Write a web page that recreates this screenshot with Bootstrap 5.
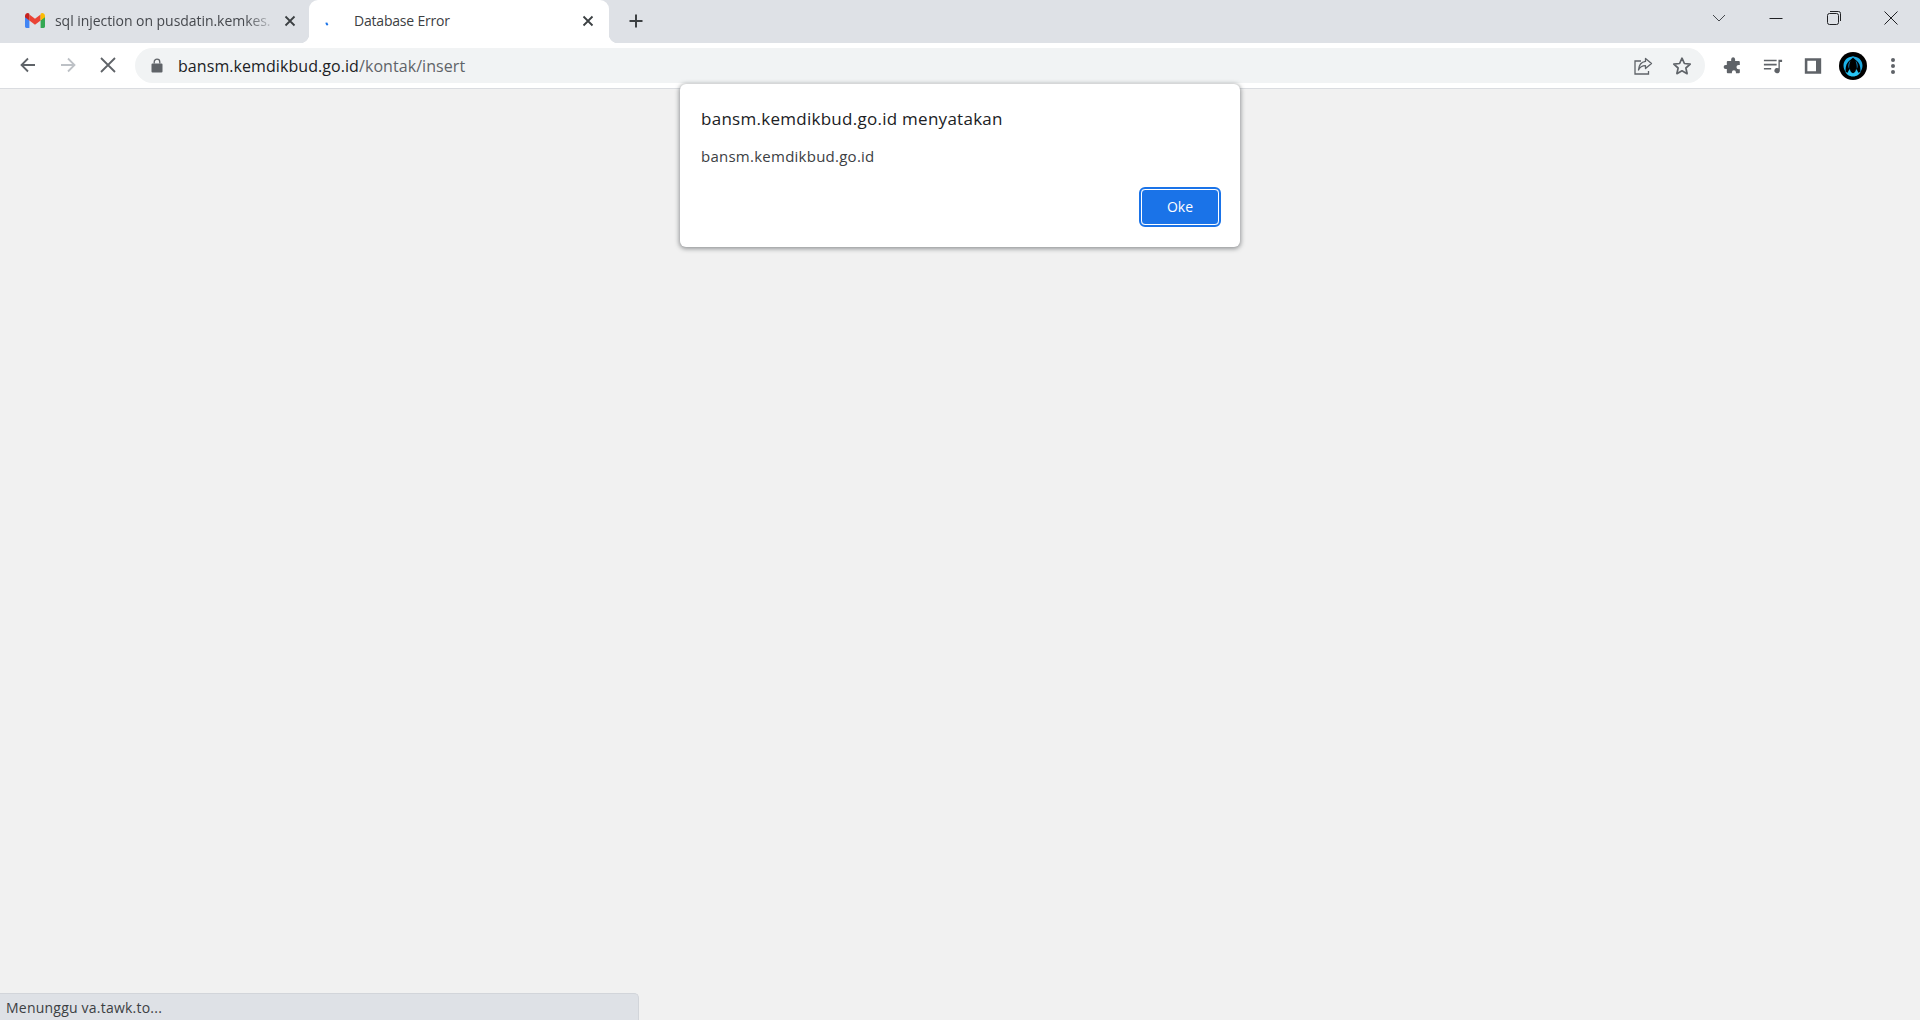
<!doctype html>
<html lang="id">
<head>
<meta charset="utf-8">
<title>Database Error</title>
<link href="https://cdn.jsdelivr.net/npm/bootstrap@5.3.0/dist/css/bootstrap.min.css" rel="stylesheet">
<style>
html,body{height:100%;overflow:hidden}
body{font-family:"Open Sans","Noto Sans",sans-serif;background:#f1f1f1;color:#202124}
.shell{height:100vh}
.tabstrip{height:43px;background:#dee1e6;flex:none}
.tab-idle{width:309px;padding:0 12px 2px 25px}
.tab-live{width:300px;background:#fff;border-radius:9px 9px 0 0;padding:0 14px 2px 16px}
.tab-live::before,.tab-live::after{content:"";position:absolute;bottom:0;width:9px;height:9px}
.tab-live::before{left:-9px;background:radial-gradient(circle at 0 0,transparent 9px,#fff 9.5px)}
.tab-live::after{right:-9px;background:radial-gradient(circle at 100% 0,transparent 9px,#fff 9.5px)}
.tab-label{font-size:14px;line-height:20px;color:#45484d;white-space:nowrap;flex:1 1 auto}
.tab-idle .tab-label{margin-left:10px;-webkit-mask-image:linear-gradient(90deg,#000 190px,transparent 222px);mask-image:linear-gradient(90deg,#000 190px,transparent 222px);letter-spacing:-.05px}
.tab-live .tab-label{margin-left:17px;color:#3c4043;letter-spacing:-.2px}
.spin-slot{width:12px;height:12px;flex:none}
.new-tab{margin:0 0 2px 16px;width:22px;flex:none}
.winctl{width:57.5px;flex:none}
.winctl svg{display:block;margin:0 auto}
.window-controls{height:36px}
.toolbar{height:46px;background:#fff;border-bottom:1px solid #dadce0;flex:none;padding-left:16.5px}
.navbtn{width:22px;flex:none;margin-right:18px;margin-bottom:1px}
.omni{width:1570px;height:35px;margin-left:-1.5px;background:#f1f3f4;border-radius:18px;padding-left:16px;padding-right:13px;flex:none}
.url{font-size:16px;line-height:22px;margin-left:15px;color:#202124;white-space:nowrap;letter-spacing:.07px}
.url-rest{color:#5f6368}
.omni-actions{gap:19px}
.tools{width:215px;flex:none;padding-left:8px}
.tool-slot{width:40px;flex:none}
.page-area{background:#f1f1f1}
.alert-box{top:-5px;left:680px;width:560px;height:163px;background:#fff;border-radius:6px;box-shadow:0 1px 4px 1px rgba(60,64,67,.5);padding:23px 21px 0 21px}
.alert-title{font-size:17px;line-height:24px;color:#202124;margin:0;letter-spacing:.27px}
.alert-msg{font-size:15px;line-height:20px;color:#3c4043;margin:15px 0 0;letter-spacing:.25px}
.ok-btn{width:78px;height:36px;margin:23px 0 0 auto;display:block;background:#1a73e8;border:1px solid #fff;border-radius:4px;outline:2px solid #1a73e8;font-size:14px;line-height:20px;color:#fff;padding:0}
.ok-btn:hover{background:#1a73e8;color:#fff}
.status{left:0;bottom:0;width:639px;height:27px;background:#dee1e6;border:1px solid #d2d5da;border-left:0;border-bottom:0;border-radius:0 5px 0 0;font-size:14px;line-height:27px;padding-left:6px;color:#3c4043;letter-spacing:.22px}
</style>
</head>
<body>
<div class="shell d-flex flex-column">
  <div class="tabstrip d-flex align-items-center">
    <div class="tab-idle d-flex align-items-center h-100">
      <svg width="20" height="15" viewBox="0 0 20 15"><path d="M0 3v10.6C0 14.4.6 15 1.4 15h3V7.5z" fill="#4285f4"/><path d="M20 3v10.6c0 .8-.6 1.4-1.4 1.4h-3V7.5z" fill="#34a853"/><path d="M15.6 1.6 10 5.8 4.4 1.6 4.4 7.5 10 11.7l5.6-4.2z" fill="#ea4335"/><path d="M0 3c0-2.4 2.8-3.8 4.4-2.3v6.8L0 4.300z" fill="#c5221f"/><path d="M20 3c0-2.400-2.800-3.800-4.400-2.300v6.800L20 4.300z" fill="#fbbc04"/></svg>
      <span class="tab-label">sql injection on pusdatin.kemkes.</span>
      <svg width="14" height="14" viewBox="0 0 14 14"><path d="M2.500 2.500l9 9m0-9l-9 9" stroke="#3c4043" stroke-width="1.800" fill="none"/></svg>
    </div>
    <div class="tab-live position-relative d-flex align-items-center h-100">
      <svg class="spin-slot" viewBox="0 0 12 12"><path d="M1.300 7.600a5 5 0 0 0 1.400 2.500" stroke="#1a73e8" stroke-width="2" fill="none"/></svg>
      <span class="tab-label">Database Error</span>
      <svg width="14" height="14" viewBox="0 0 14 14"><path d="M2.500 2.500l9 9m0-9l-9 9" stroke="#3c4043" stroke-width="1.800" fill="none"/></svg>
    </div>
    <svg class="new-tab" width="22" height="22" viewBox="0 0 22 22"><path d="M11 4.500v13M4.500 11h13" stroke="#3c4043" stroke-width="2" fill="none"/></svg>
    <div class="ms-auto d-flex align-items-center align-self-start window-controls">
      <div class="winctl"><svg width="16" height="20" viewBox="0 0 16 20"><path d="M2 7l6 6 6-6" stroke="#45484d" stroke-width="1" fill="none"/></svg></div>
      <div class="winctl"><svg width="14" height="20" viewBox="0 0 14 20"><path d="M.5 10.500h13" stroke="#202124" stroke-width="1"/></svg></div>
      <div class="winctl"><svg width="14" height="20" viewBox="0 0 14 20"><rect x=".5" y="5.500" width="11" height="11" rx="2" fill="none" stroke="#202124"/><path d="M3 3.500h8.500a2 2 0 0 1 2 2V13" fill="none" stroke="#202124"/></svg></div>
      <div class="winctl"><svg width="14" height="20" viewBox="0 0 14 20"><path d="M.5 3.500l13 13m0-13l-13 13" stroke="#202124" stroke-width="1" fill="none"/></svg></div>
    </div>
  </div>

  <div class="toolbar d-flex align-items-center">
    <svg class="navbtn" width="22" height="22" viewBox="0 0 22 22"><path d="M18 11H5M11 4.500 4.500 11l6.500 6.500" stroke="#5f6368" stroke-width="1.800" fill="none"/></svg>
    <svg class="navbtn" width="22" height="22" viewBox="0 0 22 22"><path d="M4 11h13M11 4.500l6.500 6.500L11 17.500" stroke="#bdc1c6" stroke-width="1.800" fill="none"/></svg>
    <svg class="navbtn" width="22" height="22" viewBox="0 0 22 22"><path d="M4 4l14 14m0-14L4 18" stroke="#5f6368" stroke-width="1.800" fill="none"/></svg>
    <div class="omni d-flex align-items-center">
      <svg width="12" height="15" viewBox="0 0 12 15"><path d="M1.500 5.500h9a1 1 0 0 1 1 1V13.500a1 1 0 0 1-1 1h-9a1 1 0 0 1-1-1V6.500a1 1 0 0 1 1-1z" fill="#5f6368"/><path d="M3.200 5.500V4a2.800 2.800 0 0 1 5.600 0v1.500" fill="none" stroke="#5f6368" stroke-width="1.300"/></svg>
      <span class="url">bansm.kemdikbud.go.id<span class="url-rest">/kontak/insert</span></span>
      <div class="ms-auto d-flex align-items-center omni-actions">
        <svg width="20" height="20" viewBox="0 0 20 20"><path d="M8 5H2v13h13.500v-3" fill="none" stroke="#5f6368" stroke-width="1.300"/><path d="M12.500 2.500 18.500 7.500 12.500 12.500V9.700C8.800 9.700 6.800 11 5.500 14 5.800 9.700 8 6.100 12.500 5.400z" fill="none" stroke="#5f6368" stroke-width="1.300" stroke-linejoin="round"/></svg>
        <svg width="20" height="20" viewBox="0 0 20 20"><path d="M10 2.200l2.400 5.300 5.800.6-4.300 3.900 1.200 5.700-5.100-2.900-5.100 2.900 1.200-5.700L1.800 8.100l5.800-.6z" fill="none" stroke="#5f6368" stroke-width="1.700" stroke-linejoin="round"/></svg>
      </div>
    </div>
    <div class="tools d-flex align-items-center">
      <div class="tool-slot d-flex justify-content-center"><svg width="20" height="20" viewBox="0 0 22 22"><path d="M9 3.200a2.200 2.200 0 0 1 4.300 0V5.500h4.200a1 1 0 0 1 1 1v3.300h-1.300a2.400 2.400 0 0 0 0 4.800h1.300v3.400a1 1 0 0 1-1 1h-3.300V17.800a2.200 2.200 0 0 0-4.400 0V19H5.200a1 1 0 0 1-1-1v-3.600H3a2.300 2.300 0 0 1 0-4.600h1.200V6.500a1 1 0 0 1 1-1H9z" fill="#5f6368"/></svg></div>
      <div class="tool-slot d-flex justify-content-center"><svg width="20" height="20" viewBox="0 0 22 22"><path d="M1 5h14M1 9.500h14M1 14h8" stroke="#5f6368" stroke-width="1.800" fill="none"/><path d="M17 4h4v2.500h-2.500V16A3 3 0 1 1 17 13.500z" fill="#5f6368"/></svg></div>
      <div class="tool-slot d-flex justify-content-center"><svg width="20" height="20" viewBox="0 0 22 22"><path d="M2 2.500h18v17H2zM4.800 5.200v11.600h9.500V5.200z" fill="#5f6368" fill-rule="evenodd"/></svg></div>
      <div class="tool-slot d-flex justify-content-center"><svg width="28" height="28" viewBox="0 0 28 28"><circle cx="14" cy="14" r="14" fill="#000"/><path d="M15 4.500C9 4 4.500 8 4.500 13.500c0 2.500.8 4.600 2.200 6.200-.3-3 0-6.700 2-9.200 1.500-2 4-3.300 6.300-6z" fill="#1cb4ea"/><path d="M13 4.500c6-.5 10.500 3.500 10.500 9 0 2.500-.8 4.600-2.200 6.200.3-3 0-6.700-2-9.200-1.500-2-4-3.300-6.300-6z" fill="#1ca6de"/><path d="M11.500 8.500C9 11 8.700 14.500 10.200 17c-.2-3 .3-6 1.300-8.500zM16.500 8.500c2.500 2.500 2.800 6 1.300 8.500.2-3-.3-6-1.300-8.500z" fill="#0f86c0"/><path d="M6 19c1.200 3.400 4.200 5.500 8 5.500s6.800-2.100 8-5.500c-.8 1-1.700 1.600-2.800 1.800-.3-1.600-1.100-2.800-2.200-3.800 0 1.800-.7 3.200-3 4.300-2.300-1.100-3-2.500-3-4.300-1.100 1-1.900 2.200-2.200 3.800C7.700 20.600 6.800 20 6 19z" fill="#27c4f2"/></svg></div>
      <div class="tool-slot d-flex justify-content-center"><svg width="6" height="18" viewBox="0 0 6 18"><circle cx="3" cy="3" r="2" fill="#5f6368"/><circle cx="3" cy="9" r="2" fill="#5f6368"/><circle cx="3" cy="15" r="2" fill="#5f6368"/></svg></div>
    </div>
  </div>

  <main class="page-area flex-grow-1 position-relative">
    <div class="alert-box position-absolute">
      <h1 class="alert-title fw-normal">bansm.kemdikbud.go.id menyatakan</h1>
      <p class="alert-msg">bansm.kemdikbud.go.id</p>
      <button type="button" class="btn ok-btn">Oke</button>
    </div>
    <div class="status position-absolute">Menunggu va.tawk.to...</div>
  </main>
</div>
<script src="https://cdn.jsdelivr.net/npm/bootstrap@5.3.0/dist/js/bootstrap.bundle.min.js"></script>
</body>
</html>
